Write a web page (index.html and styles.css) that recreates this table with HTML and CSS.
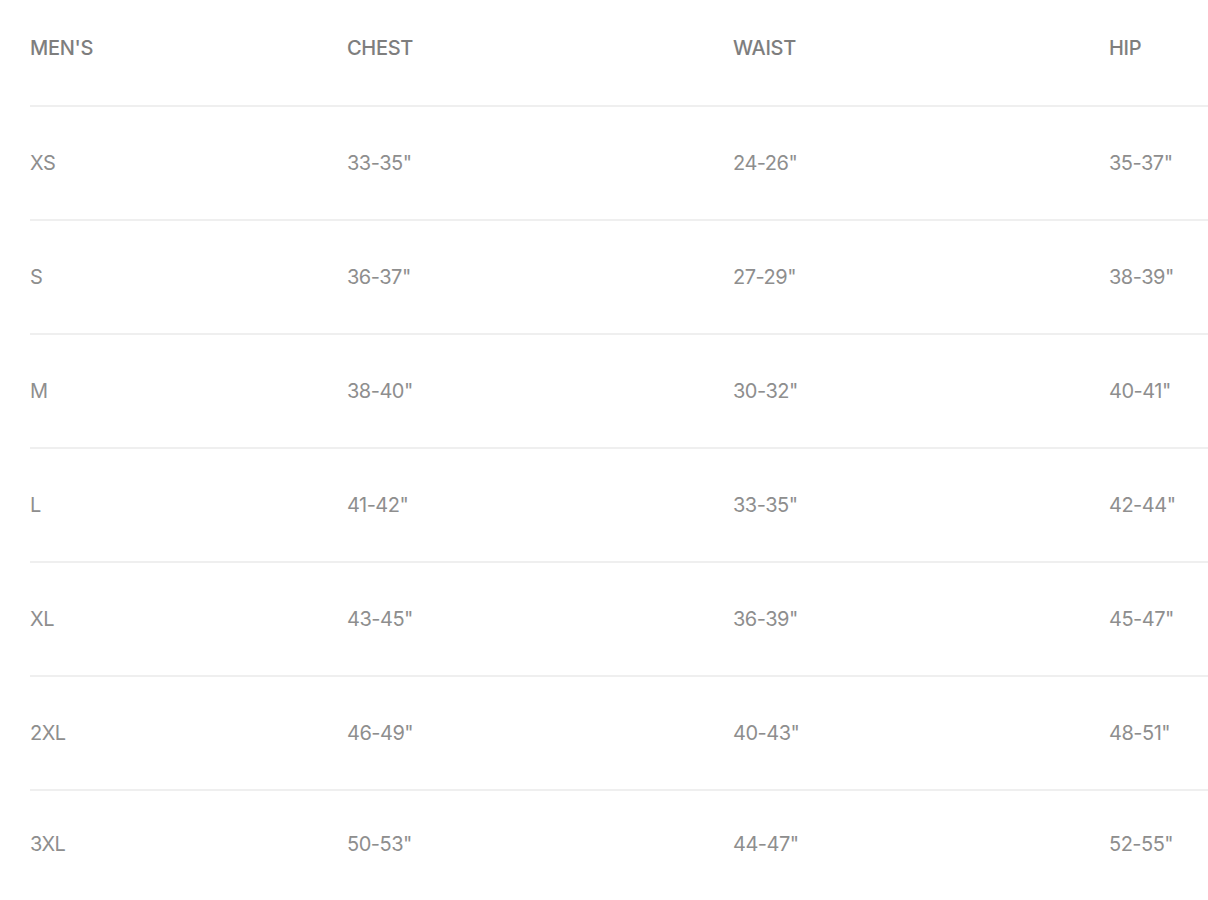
FILE: index.html
```html
<!DOCTYPE html>
<html>
<head>
<meta charset="utf-8">
<link rel="stylesheet" href="styles.css">
</head>
<body>
<div class="chart">
  <div class="row head">
    <div class="cell">MEN'S</div>
    <div class="cell">CHEST</div>
    <div class="cell">WAIST</div>
    <div class="cell">HIP</div>
  </div>
  <div class="row"><div class="cell">XS</div><div class="cell">33-35"</div><div class="cell">24-26"</div><div class="cell">35-37"</div></div>
  <div class="row"><div class="cell">S</div><div class="cell">36-37"</div><div class="cell">27-29"</div><div class="cell">38-39"</div></div>
  <div class="row"><div class="cell">M</div><div class="cell">38-40"</div><div class="cell">30-32"</div><div class="cell">40-41"</div></div>
  <div class="row"><div class="cell">L</div><div class="cell">41-42"</div><div class="cell">33-35"</div><div class="cell">42-44"</div></div>
  <div class="row"><div class="cell">XL</div><div class="cell">43-45"</div><div class="cell">36-39"</div><div class="cell">45-47"</div></div>
  <div class="row"><div class="cell">2XL</div><div class="cell">46-49"</div><div class="cell">40-43"</div><div class="cell">48-51"</div></div>
  <div class="row last"><div class="cell">3XL</div><div class="cell">50-53"</div><div class="cell">44-47"</div><div class="cell">52-55"</div></div>
</div>
</body>
</html>
```
FILE: styles.css
```css
html, body {
  margin: 0;
  padding: 0;
  background: #ffffff;
  overflow: hidden;
}
body {
  font-family: Inter, "Noto Sans", sans-serif;
}
.chart {
  margin-left: 30px;
  width: 1178px;
}
.row {
  display: grid;
  grid-template-columns: 317px 386px 376px 1fr;
  align-items: center;
  box-sizing: border-box;
  height: 114px;
  padding-bottom: 1px;
  border-bottom: 2px solid #efefef;
  font-size: 20px;
  color: #8e8e8e;
  font-weight: 400;
  letter-spacing: -0.5px;
}
.row.head {
  height: 107px;
  padding-bottom: 0;
  align-items: start;
  color: #7e7e7e;
  font-weight: 500;
  letter-spacing: -0.3px;
}
.row.head .cell {
  padding-top: 36px;
}
.row.last {
  border-bottom: none;
  padding-bottom: 8px;
}
.cell {
  white-space: nowrap;
}
```
